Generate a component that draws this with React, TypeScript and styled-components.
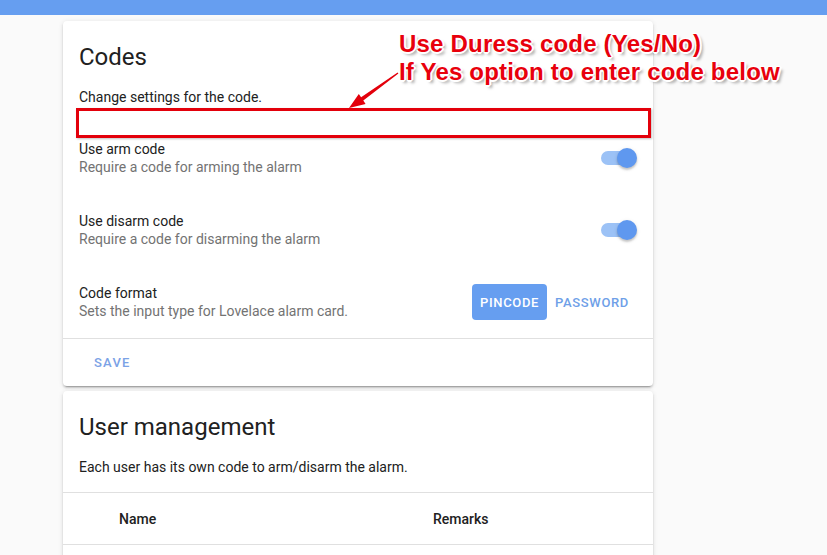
import React from 'react'
import styled, { createGlobalStyle } from 'styled-components'

const GlobalStyle = createGlobalStyle`
  html, body {
    margin: 0;
    padding: 0;
    background: #fafafa;
    font-family: Roboto, 'Noto Sans', sans-serif;
    color: #212121;
    -webkit-font-smoothing: antialiased;
  }
`

const blue = '#669ef0'

const Page = styled.div`
  position: relative;
  width: 827px;
  min-height: 555px;
  overflow: hidden;
`

const TopBar = styled.div`
  height: 15px;
  background: ${blue};
`

const Content = styled.div`
  display: flex;
  flex-direction: column;
  gap: 5px;
  padding: 6px 0 0 63px;
`

const Card = styled.div`
  width: 590px;
  background: #fff;
  border-radius: 4px;
  box-shadow: 0 2px 2px 0 rgba(0, 0, 0, 0.14), 0 1px 5px 0 rgba(0, 0, 0, 0.12),
    0 3px 1px -2px rgba(0, 0, 0, 0.2);
`

const CardHeader = styled.div`
  padding: 20px 16px 0;
  font-size: 24px;
  line-height: 32px;
  font-weight: 400;
  color: #212121;
`

const CardText = styled.div`
  padding: 14px 16px 15px;
  font-size: 14px;
  line-height: 20px;
  color: #212121;
`

const SettingsRow = styled.div`
  display: flex;
  align-items: center;
  justify-content: space-between;
  height: 72px;
  padding: 0 16px;
`

const RowInfo = styled.div`
  display: flex;
  flex-direction: column;
`

const RowTitle = styled.div`
  font-size: 14px;
  line-height: 18px;
  color: #212121;
`

const RowDescription = styled.div`
  font-size: 14px;
  line-height: 18px;
  color: #737373;
`

const Switch = styled.div<{ checked?: boolean }>`
  position: relative;
  width: 36px;
  height: 20px;
  display: flex;
  align-items: center;

  &::before {
    content: '';
    width: 30px;
    height: 14px;
    border-radius: 7px;
    background: ${({ checked }) => (checked ? '#9cc2f6' : '#c4c4c4')};
  }

  &::after {
    content: '';
    position: absolute;
    top: 0;
    ${({ checked }) => (checked ? 'right: 0;' : 'left: 0;')}
    width: 20px;
    height: 20px;
    border-radius: 50%;
    background: ${({ checked }) => (checked ? '#5f98ef' : '#fafafa')};
    box-shadow: 0 2px 2px rgba(0, 0, 0, 0.18), 0 1px 4px rgba(0, 0, 0, 0.1);
  }
`

const ButtonGroup = styled.div`
  display: flex;
`

const FormatButton = styled.button<{ active?: boolean }>`
  height: 36px;
  padding: 0 8px;
  border: 0;
  border-radius: 4px;
  font-family: Roboto, sans-serif;
  font-size: 13px;
  font-weight: 500;
  letter-spacing: 0.65px;
  text-transform: uppercase;
  background: ${({ active }) => (active ? blue : 'transparent')};
  color: ${({ active }) => (active ? '#fff' : '#6f9fe8')};
`

const Actions = styled.div`
  border-top: 1px solid #e0e0e0;
  height: 47px;
  display: flex;
  align-items: center;
  padding: 0 16px;
`

const TextButton = styled.button`
  border: 0;
  background: none;
  padding: 0 15px;
  height: 36px;
  font-family: Roboto, sans-serif;
  font-size: 13px;
  font-weight: 500;
  letter-spacing: 1.25px;
  color: #7ba2e6;
`

const Table = styled.div`
  border-top: 1px solid #e0e0e0;
`

const TableRow = styled.div<{ header?: boolean }>`
  display: grid;
  grid-template-columns: 314px 1fr;
  align-items: center;
  height: ${({ header }) => (header ? '51px' : '56px')};
  padding-left: 56px;
  border-bottom: ${({ header }) => (header ? '1px solid #e0e0e0' : 'none')};
  font-size: 14px;
  font-weight: ${({ header }) => (header ? 500 : 400)};
  color: #212121;
`

const Callout = styled.div`
  position: absolute;
  left: 399px;
  top: 30px;
  font-family: 'Liberation Sans', Arial, sans-serif;
  font-weight: 700;
  font-size: 24px;
  line-height: 28px;
  letter-spacing: 0.2px;
  color: #e8000c;
  white-space: nowrap;
  text-shadow: 1px 1px 0 #fff, -1px -1px 0 #fff, 1px -1px 0 #fff, -1px 1px 0 #fff,
    0 2px 0 #fff, 2px 0 0 #fff, 3px 3px 3px rgba(0, 0, 0, 0.35);
`

const CalloutBox = styled.div`
  position: absolute;
  left: 76px;
  top: 108px;
  width: 575px;
  height: 30px;
  box-sizing: border-box;
  border: 3px solid #e3000b;
  box-shadow: 1px 1px 2px rgba(0, 0, 0, 0.25);
`

const CalloutArrow = styled.svg`
  position: absolute;
  left: 0;
  top: 0;
  width: 827px;
  height: 555px;
  pointer-events: none;
`

const App: React.FC = () => {
  return (
    <Page>
      <GlobalStyle />
      <TopBar />
      <Content>
        <Card>
          <CardHeader>Codes</CardHeader>
          <CardText>Change settings for the code.</CardText>
          <SettingsRow>
            <RowInfo>
              <RowTitle>Use arm code</RowTitle>
              <RowDescription>Require a code for arming the alarm</RowDescription>
            </RowInfo>
            <Switch checked />
          </SettingsRow>
          <SettingsRow>
            <RowInfo>
              <RowTitle>Use disarm code</RowTitle>
              <RowDescription>Require a code for disarming the alarm</RowDescription>
            </RowInfo>
            <Switch checked />
          </SettingsRow>
          <SettingsRow>
            <RowInfo>
              <RowTitle>Code format</RowTitle>
              <RowDescription>Sets the input type for Lovelace alarm card.</RowDescription>
            </RowInfo>
            <ButtonGroup>
              <FormatButton active>Pincode</FormatButton>
              <FormatButton>Password</FormatButton>
            </ButtonGroup>
          </SettingsRow>
          <Actions>
            <TextButton>SAVE</TextButton>
          </Actions>
        </Card>
        <Card>
          <CardHeader>User management</CardHeader>
          <CardText>Each user has its own code to arm/disarm the alarm.</CardText>
          <Table>
            <TableRow header>
              <div>Name</div>
              <div>Remarks</div>
            </TableRow>
            <TableRow />
          </Table>
        </Card>
      </Content>

      {/* annotation drawn over the screenshot */}
      <CalloutBox />
      <CalloutArrow viewBox="0 0 827 555">
        <polygon
          points="349,108 358.8,93.9 361.1,97.2 397.6,72.4 398.4,73.6 363.3,100.6 365.6,103.9"
          fill="#e3000b"
        />
      </CalloutArrow>
      <Callout>
        Use Duress code (Yes/No)
        <br />
        If Yes option to enter code below
      </Callout>
    </Page>
  )
}

export default App
